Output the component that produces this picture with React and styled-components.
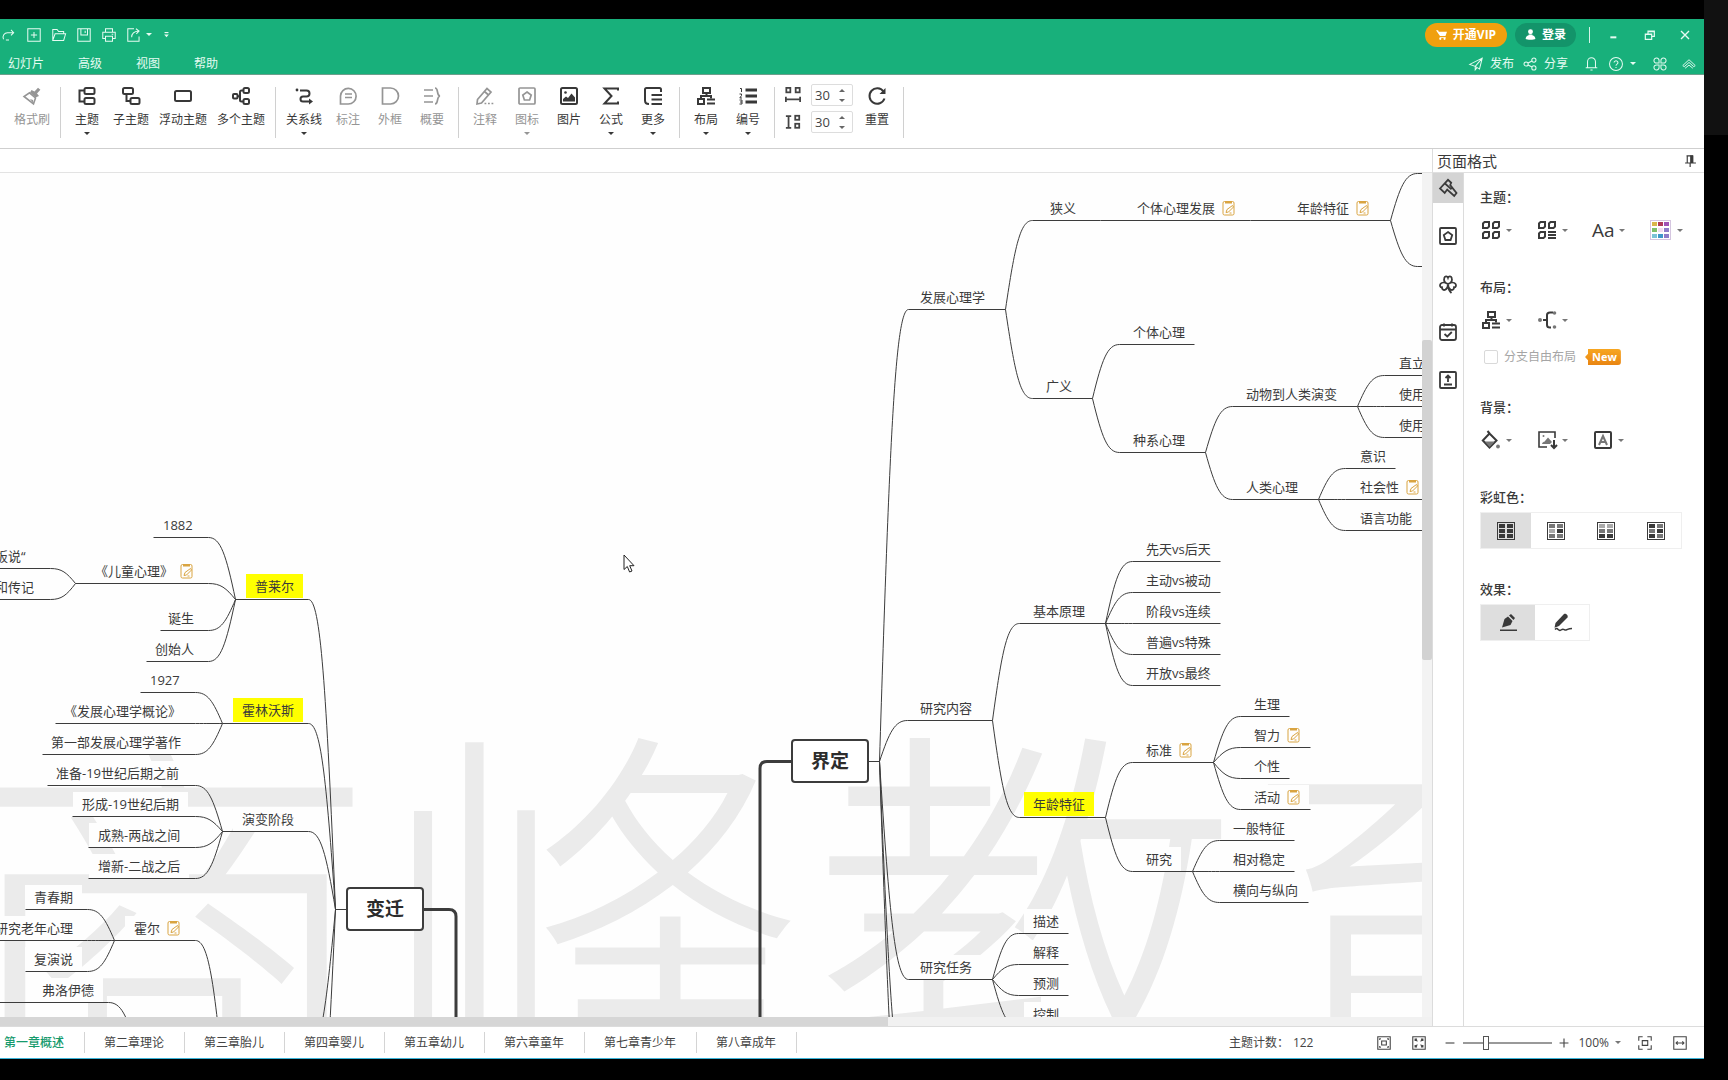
import React, { useState } from 'react'
import styled, { createGlobalStyle } from 'styled-components'

const fonts = '"Open Sans", "Noto Sans", "Noto Sans CJK SC", sans-serif'

/* ---------- icons ---------- */

const glyphs = {
  // quick bar
  redo: <path d="M2 14.5A5.8 5.8 0 0 1 7.5 6H15M11.5 2.5 15 6l-3.500 3.500M5 15.500h4" />,
  add: <path d="M1 1h16v16H1zM9 5v8M5 9h8" />,
  open: <path d="M1 16V2h5.500l2 2.500h6.500v3M1 16l3-8.500h13.500l-2.500 8.500z" />,
  save: <path d="M1 1h16v16H1zM5 1v8h8.500V1M10.500 3.500v3" />,
  print: <path d="M4.500 5.500v-4.500h9v4.500M4.500 13.500H1v-8h16v8h-3.500M4.500 10.500h9V17h-9zM12.500 8h2" />,
  exportIt: <path d="M9 1H1v16h14.500V11M6 12c0-5 3-7.500 9-8M11.500 1l4 3-3.500 3.500" />,
  customize: <><path d="M4 4h10" strokeWidth="3" /><path d="M3 9h12l-6 7z" fill="currentColor" stroke="none" /></>,
  // title bar
  send: <path d="M1 9.500 17 1.500 13.500 15.500 8 12zM17 1.500 8 12v4.500l2.500-3" />,
  share: <><circle cx="4" cy="9" r="2.700" /><circle cx="14" cy="4" r="2.700" /><circle cx="14" cy="14" r="2.700" /><path d="M6.500 7.800 11.500 5.200M6.500 10.200l5 2.600" /></>,
  bell: <path d="M3.500 14.500V6.500a5.500 5.500 0 0 1 11 0V14.500M1 15h16M7.500 18h3" />,
  help: <><circle cx="9" cy="9" r="8.300" /><path d="M6.500 7.200a2.500 2.300 0 1 1 3.800 2C9.300 9.800 9 10 9 11.200M9 12.800v1.400" /></>,
  apps: <><path d="M7.800 7.800V4.800a3.300 3.300 0 1 0-3.300 3zM10.200 7.800V4.800a3.300 3.300 0 1 1 3.300 3zM7.800 10.200v3a3.300 3.300 0 1 1-3.300-3zM10.200 10.200v3a3.300 3.300 0 1 0 3.300-3z" /></>,
  up: <path d="M1 11 9 3.500l8 7.500-1.800 1.500L9 7l-6.200 5.500zM4 14.500 9 10.500l5 4" />,
  cart: <g fill="currentColor" stroke="none"><path d="M0 2h3.500l1 2.500H18l-2.500 7H6.500zM6 13h10v1.500H6z" /><circle cx="7" cy="16" r="1.800" /><circle cx="14" cy="16" r="1.800" /></g>,
  user: <g fill="currentColor" stroke="none"><circle cx="9" cy="4.500" r="4" /><path d="M1 16.500c0-9 16-9 16 0-2 1.500-14 1.500-16 0z" /><path d="M6 9h6v2H6z" /></g>,
  minimize: <path d="M5 12.500h9" strokeWidth="3" />,
  restore: <path d="M2 7.500h9.500v8H2zM6 7V3h9.500v8H12M6 4h9M2 8h9" strokeWidth="1.800" />,
  close: <path d="M3 3l12 12M15 3 3 15" />,
  // ribbon
  brush: <g fill="currentColor" stroke="none"><path d="M11.500 4.500 15 .8l2.400 2L14 6.500l2 2.500-3.500 1.500L7 5.500l1.500-2.500z" /><path d="M6.500 5.800 12.500 11 10.500 17 1 9.500z" fill="none" stroke="currentColor" strokeWidth="1.600" /><path d="m7 12 3 1 .5 3.500z" /></g>,
  topic: <><path d="M6 3.500H1.500v11H7" /><rect x="6.500" y="1" width="10" height="6" rx="1.500" /><rect x="6.500" y="11" width="10" height="6" rx="1.500" /></>,
  subtopic: <><rect x="1" y="1" width="10" height="6" rx="1.500" /><path d="M4.500 7v7H8" /><rect x="8.500" y="11" width="9" height="6" rx="1.500" /></>,
  floating: <rect x="1" y="4" width="16" height="10" rx="1.500" />,
  multi: <><rect x="1" y="7" width="4.500" height="4.500" rx="1" /><rect x="11.500" y="1" width="5.500" height="5" rx="1.500" /><rect x="11.500" y="12" width="5.500" height="5" rx="1.500" /><path d="M5.500 9.200H8M11.500 3.500H9.500Q8 3.500 8 5v8q0 1.500 1.500 1.500h2" /></>,
  relation: <><path d="M5 3.500h6.500a2.800 2.800 0 0 1 0 6H8a2.500 2.500 0 0 0 0 5h6" /><circle cx="2" cy="3" r="1.400" fill="currentColor" stroke="none" /><path d="m14 11.500 4 3-4 3z" fill="currentColor" stroke="none" /></>,
  callout: <path d="M1.500 17V9a7.800 7.800 0 1 1 7.800 8zM6 7h7M6 10.500h7" />,
  boundary: <path d="M1.500 1h8a8 8 0 0 1 0 16h-8z" />,
  summary: <path d="M1 3h9M1 9h9M1 15h9M12 1c4 0 1 7.500 5 8-4 .5-1 8-5 8" />,
  note: <><path d="M1.500 12.500 11 1.500l4 3.500-9.500 11-4.500 1zM8.500 4.500l4 3.500" /><path d="M8.500 16.500h1.800M12 16.500h1.800M15.500 16.500h1.800" /></>,
  mark: <><rect x="1" y="1" width="16" height="16" rx="1" /><path d="m9 5 4.200 3.100-1.600 4.900H6.400L4.800 8.100z" /></>,
  image: <><rect x="1" y="1" width="16" height="16" rx="1.500" /><path d="M3 14.500V12l3-2.500L8 11l3.500-4.500 3.500 4v4z" fill="currentColor" stroke="none" /><circle cx="5.500" cy="5.500" r="1.300" fill="currentColor" stroke="none" /></>,
  formula: <path d="M16 3.500V1.500H2.500l7 7.500-7 7.500H16v-2" />,
  more: <path d="M17 5V2.500Q17 1 15.500 1h-13Q1 1 1 2.500v11Q1 17 5 17M7.500 8H18M7.500 12.500H18M7.500 17H18" />,
  layout: <><rect x="6" y="1" width="7" height="5" /><path d="M9.500 6v2.500M4 12V9h10v2.500" /><rect x="1" y="12" width="6" height="5" /><path d="M10 12.500h8M10 16.500h8" /></>,
  numbering: <><path d="M6.500 3H18M6.500 9H18M6.500 15H18" strokeWidth="3" /><path d="M1 1.500h1.500V5M.5 7h2v1.500L.8 11h2.200M.5 13H3v4H.5M1 15h2" strokeWidth="1" /></>,
  hgap: <><rect x="1.500" y="1" width="4.500" height="5" /><rect x="12" y="1" width="4.500" height="5" /><path d="M1 11v6M17 11v6M1 14h16" /></>,
  vgap: <><path d="M1 2.500h6M4 2.500v13M1 15.500h6" /><rect x="11.500" y="2" width="4.500" height="4.500" /><rect x="11.500" y="11" width="4.500" height="4.500" /></>,
  reset: <><path d="M15.500 4.500A7.700 7.700 0 1 0 16.500 11.500" /><path d="M17.500 1v6h-6z" fill="currentColor" stroke="none" /></>,
  // side rail
  paint: <path d="M1 9.500 9 .8l3.200 3-1 2.200 6.300 8-2.300 3-7-6.500-2.500 3.500zM6 4.500l6.500 5.800" />,
  clover: <path d="M9 9C6 8 4.600 5.500 5.200 3.200 5.700 1 8.200.6 9 2.800 9.800.6 12.300 1 12.800 3.200 13.400 5.500 12 8 9 9zM9 9C6.500 7.500 3 7 1.600 8.800.2 10.600 1.400 12.400 3 12.300 2.700 14.300 4.600 15.600 6.300 14.700 8.300 13.600 9 11.500 9 9zM9 9c2.500-1.500 6-2 7.400-.2 1.400 1.800.2 3.600-1.400 3.500.3 2-1.600 3.300-3.300 2.400C9.700 13.600 9 11.500 9 9zM9 9c0 4 1 7 3.500 9" />,
  task: <><rect x="1" y="2" width="16" height="15" rx="2" /><path d="M1 6.500h16M5 .5v3M13 .5v3M5.500 11l2.800 2.500 4.500-4.500" /></>,
  upload: <><rect x="1" y="1" width="16" height="16" rx="1" /><path d="M9 11V5M6.500 7 9 4.500 11.500 7M5 13.500h8" /></>,
  pin: <><path d="M3.500 2.500h9M4.500 3V12M1.500 12.500h15M8.500 12.500V18" /><path d="M8.500 2h4.500v10.500H8.500z" fill="currentColor" stroke="none" /></>,
  // page format panel
  themeGrid: <path d="M2.500 1H7v4.500L5.500 7H1V2.500zM12.500 1H17v4.500L15.500 7H11V2.500zM2.500 11H7v4.500L5.500 17H1v-4.500zM12.500 11H17v4.500L15.500 17H11v-4.500z" />,
  themeList: <path d="M2.500 1H7v4.500L5.500 7H1V2.500zM12.500 1H17v4.500L15.500 7H11V2.500zM2.500 11H7v4.500L5.500 17H1v-4.500zM10 11h8M10 14h8M10 17h8" />,
  branch: <><path d="M5 9h4M15 1.500h-3Q9 1.500 9 4v10q0 2.500 3 2.500h1" /><g fill="#777" stroke="none"><circle cx="2" cy="9" r="2" /><circle cx="16.500" cy="2" r="1.800" /><circle cx="16.500" cy="16" r="1.800" /></g></>,
  fill: <><path d="M5.500 0 8 3M7.500 2.500l7 7L7.500 16.500.8 9.500z" /><path d="M2.800 10.500h10l-5.200 5.500z" fill="#777" stroke="none" /><circle cx="16" cy="15.500" r="1.900" fill="#777" stroke="none" /></>,
  picture: <><path d="M17 7V1H1v15h8" strokeWidth="1.600" /><path d="M4 13c1-3 2-1.500 3-3l3-3.500 4 4.500-2 2z" fill="#777" stroke="none" /><circle cx="5.500" cy="5" r="1" fill="#777" stroke="none" /><path d="M16 9v8M13 14l3 3 3-3" /></>,
  letter: <><rect x="1" y="1" width="16" height="16" rx="1" /><path d="M5 14 9 5l4 9M6.500 11h5" stroke="#777" /></>,
  pen: <g fill="currentColor" stroke="none"><path d="M10 1.500 12 0l4 4-1.500 2zM9 2.500l4.500 4.500-2 4-8.500 2.500L5.500 5z" /><path d="M1 15.500h17V17H1z" /></g>,
  scribble: <><path d="M11 0c2-.8 4.500 1.500 3.500 3.500L6 12l-4.500 1.800L2.500 9z" fill="currentColor" stroke="none" /><path d="M2 15.500c3-3 3 2.500 6 .5s3 .5 5 0 2-1.500 6-1.500" strokeWidth="1.500" /></>,
  // status bar
  fitPage: <path d="M1 1h16v16H1zM6 6.500h6v5H6zM3.500 5V3.500H5M13 3.500h1.500V5M3.500 13v1.500H5M13 14.500h1.500V13" />,
  expand: <path d="M1 1h16v16H1zM4 6.500V4h2.500M4 4l3 3M14 6.500V4h-2.500M14 4l-3 3M4 11.500V14h2.500M4 14l3-3M14 11.500V14h-2.500M14 14l-3-3" />,
  focus: <path d="M1 6V1h5M12 1h5v5M1 12v5h5M12 17h5v-5M5.500 6h7v6h-7z" />,
  fitWidth: <path d="M1 1h16v16H1zM4 9h10M6 7 4 9l2 2M12 7l2 2-2 2" />,
  minus: <path d="M1 9h16" />,
  plus: <path d="M1 9h16M9 1v16" />,
}

const Svg = styled.svg`
  display: block;
  flex: none;
  width: ${p => p.$size}px;
  height: ${p => p.$size}px;
  fill: none;
  stroke: currentColor;
  overflow: visible;
`

const Icon = ({ name, size = 18, weight = 2 }) => (
  <Svg $size={size} viewBox="0 0 18 18" strokeWidth={weight} aria-hidden="true">{glyphs[name]}</Svg>
)

const Caret = styled.i`
  flex: none;
  width: 0;
  height: 0;
  border: 3px solid transparent;
  border-top-color: ${p => p.$color || 'currentColor'};
  border-bottom: 0;
`

/* ---------- mind map data ---------- */

// x: text left, y: underline, start: where the branch lands, end: where its children leave
const definition = {
  end: 879, y: 588,
  children: [
    { text: '发展心理学', x: 920, y: 136, start: 908, end: 1005, children: [
      { text: '狭义', x: 1050, y: 47, start: 1032, end: 1100, children: [
        { text: '个体心理发展', x: 1137, y: 47, start: 1100, end: 1250, note: true, children: [
          { text: '年龄特征', x: 1297, y: 47, start: 1250, end: 1390, note: true, children: [
            { y: 0, start: 1417, end: 1440 },
            { y: 93, start: 1417, end: 1440 },
          ] },
        ] },
      ] },
      { text: '广义', x: 1046, y: 225, start: 1032, end: 1092, children: [
        { text: '个体心理', x: 1133, y: 171, start: 1119, end: 1194 },
        { text: '种系心理', x: 1133, y: 279, start: 1119, end: 1205, children: [
          { text: '动物到人类演变', x: 1246, y: 233, start: 1232, end: 1357, children: [
            { text: '直立', x: 1399, y: 202, start: 1384, end: 1440 },
            { text: '使用', x: 1399, y: 233, start: 1384, end: 1440 },
            { text: '使用', x: 1399, y: 264, start: 1384, end: 1440 },
          ] },
          { text: '人类心理', x: 1246, y: 326, start: 1232, end: 1318, children: [
            { text: '意识', x: 1360, y: 295, start: 1345, end: 1395 },
            { text: '社会性', x: 1360, y: 326, start: 1345, end: 1440, note: true },
            { text: '语言功能', x: 1360, y: 357, start: 1345, end: 1440 },
          ] },
        ] },
      ] },
    ] },
    { text: '研究内容', x: 920, y: 547, start: 907, end: 992, children: [
      { text: '基本原理', x: 1033, y: 450, start: 1019, end: 1105, children: [
        { text: '先天vs后天', x: 1146, y: 388, start: 1132, end: 1220 },
        { text: '主动vs被动', x: 1146, y: 419, start: 1132, end: 1220 },
        { text: '阶段vs连续', x: 1146, y: 450, start: 1132, end: 1220 },
        { text: '普遍vs特殊', x: 1146, y: 481, start: 1132, end: 1220 },
        { text: '开放vs最终', x: 1146, y: 512, start: 1132, end: 1220 },
      ] },
      { text: '年龄特征', x: 1033, y: 644, start: 1019, end: 1105, marked: true, children: [
        { text: '标准', x: 1146, y: 589, start: 1132, end: 1213, note: true, children: [
          { text: '生理', x: 1254, y: 543, start: 1240, end: 1289 },
          { text: '智力', x: 1254, y: 574, start: 1240, end: 1310, note: true },
          { text: '个性', x: 1254, y: 605, start: 1240, end: 1289 },
          { text: '活动', x: 1254, y: 636, start: 1240, end: 1310, note: true },
        ] },
        { text: '研究', x: 1146, y: 698, start: 1132, end: 1192, children: [
          { text: '一般特征', x: 1233, y: 667, start: 1219, end: 1294 },
          { text: '相对稳定', x: 1233, y: 698, start: 1219, end: 1294 },
          { text: '横向与纵向', x: 1233, y: 729, start: 1219, end: 1308 },
        ] },
      ] },
    ] },
    { text: '研究任务', x: 920, y: 806, start: 908, end: 992, children: [
      { text: '描述', x: 1033, y: 760, start: 1018, end: 1068 },
      { text: '解释', x: 1033, y: 791, start: 1018, end: 1068 },
      { text: '预测', x: 1033, y: 822, start: 1018, end: 1068 },
      { text: '控制', x: 1033, y: 853, start: 1018, end: 1068 },
    ] },
    { y: 920, start: 907, end: 930 },
    { y: 1000, start: 907, end: 930 },
  ],
}

const history = {
  end: 335, y: 736,
  children: [
    { text: '普莱尔', x: 255, y: 426, start: 308, end: 235, marked: true, children: [
      { text: '1882', x: 163, y: 364, start: 208, end: 153 },
      { text: '《儿童心理》', x: 95, y: 410, start: 208, end: 75, note: true, children: [
        { text: '板说“', x: -5, y: 395, start: 50, end: -10 },
        { text: '和传记', x: -5, y: 426, start: 50, end: -10 },
      ] },
      { text: '诞生', x: 168, y: 457, start: 208, end: 160 },
      { text: '创始人', x: 155, y: 488, start: 208, end: 146 },
    ] },
    { text: '霍林沃斯', x: 242, y: 550, start: 308, end: 222, marked: true, children: [
      { text: '1927', x: 150, y: 519, start: 195, end: 140 },
      { text: '《发展心理学概论》', x: 64, y: 550, start: 195, end: 55 },
      { text: '第一部发展心理学著作', x: 51, y: 581, start: 195, end: 42 },
    ] },
    { text: '演变阶段', x: 242, y: 658, start: 308, end: 222, children: [
      { text: '准备-19世纪后期之前', x: 56, y: 612, start: 195, end: 47 },
      { text: '形成-19世纪后期', x: 82, y: 643, start: 195, end: 72 },
      { text: '成熟-两战之间', x: 98, y: 674, start: 195, end: 88 },
      { text: '增新-二战之后', x: 98, y: 705, start: 195, end: 88 },
    ] },
    { y: 880, start: 307, end: 280 },
    { y: 1030, start: 307, end: 280 },
  ],
}

const schools = {
  end: 224, y: 917,
  children: [
    { text: '霍尔', x: 134, y: 767, start: 195, end: 114, note: true, children: [
      { text: '青春期', x: 34, y: 736, start: 87, end: 25 },
      { text: '研究老年心理', x: -5, y: 767, start: 87, end: -10 },
      { text: '复演说', x: 34, y: 798, start: 87, end: 25 },
    ] },
  ],
}

const freud = {
  end: 136, y: 875,
  children: [{ text: '弗洛伊德', x: 42, y: 829, start: 108, end: -10 }],
}

const flatten = node =>
  (node.children || []).flatMap(child => [{ ...child, parent: node }, ...flatten(child)])

const topics = [definition, history, schools, freud].flatMap(flatten)

const branchPath = ({ parent, start, end, y }) => {
  const dx = start - parent.end
  const dy = y - parent.y
  return `M${parent.end} ${parent.y}C${parent.end + dx * 0.35} ${parent.y + dy * 0.72} ${parent.end + dx * 0.55} ${y} ${start} ${y}H${end}`
}

/* ---------- layout ---------- */

const GlobalStyle = createGlobalStyle`
  * { box-sizing: border-box; }
  body {
    margin: 0;
    background: #000;
    font-family: ${fonts};
    font-size: 12px;
    line-height: 16px;
    color: #3a3a3a;
  }
  button, input { font: inherit; color: inherit; margin: 0; }
  button {
    padding: 0;
    border: 0;
    background: none;
    white-space: nowrap;
    cursor: pointer;
  }
`

const Screen = styled.div`
  display: flex;
  min-height: 100vh;
`

const Window = styled.div`
  display: flex;
  flex-direction: column;
  flex: 1;
  min-width: 0;
  margin: 19px 0 21px;
  background: #fff;
`

const Desktop = styled.div`
  width: 24px;
  height: 135px;
  background: #111;
`

const Header = styled.header`
  background: #18b07b;
  border-bottom: 1px solid #6c9f8c;
  color: #e6fbf2;
`

const TitleRow = styled.div`
  display: flex;
  align-items: center;
  justify-content: space-between;
  height: 31px;
`

const MenuRow = styled(TitleRow)`
  height: 24px;
  padding-top: 3px;
`

const QuickBar = styled.div`
  display: flex;
  align-items: center;
  gap: 11px;
  padding-left: 2px;
`

const QuickButton = styled.button`
  display: flex;
  align-items: center;
  gap: 5px;
`

const Menu = styled.nav`
  display: flex;
  gap: 34px;
  padding-left: 8px;
`

const HeaderTools = styled.div`
  display: flex;
  align-items: center;
  padding-right: ${p => p.$end}px;
`

const Pill = styled.button`
  display: flex;
  align-items: center;
  justify-content: center;
  gap: 6px;
  width: ${p => p.$width}px;
  height: 24px;
  margin-right: ${p => p.$after}px;
  border-radius: 12px;
  background: ${p => p.$color};
  color: #fff;
  font-weight: 700;
`

const HeaderRule = styled.span`
  width: 1px;
  height: 16px;
  background: #d5f3e8;
  margin-right: 17px;
`

const HeaderButton = styled.button`
  display: flex;
  align-items: center;
  gap: 7px;
  margin-left: ${p => p.$before}px;
`

const Ribbon = styled.div`
  display: flex;
  height: 74px;
  padding: 12px 0 0 9px;
  border-bottom: 1px solid #cfcfcf;
`

const RibbonGroup = styled.div`
  display: flex;
  align-items: flex-start;
  height: 51px;
  padding-right: 5px;
  margin-right: 5px;
  border-right: 1px solid #d0d0d0;
`

const Tool = styled.button`
  display: flex;
  flex-direction: column;
  align-items: center;
  min-width: 42px;
  padding: 0 5px;
  color: ${p => (p.$muted ? '#959595' : '#383838')};

  span { margin: 7px 0 4px; }
`

const Spacing = styled.div`
  display: flex;
  flex-direction: column;
  gap: 5px;
  padding: 0 3px 0 5px;
  margin-top: -3px;
`

const SpacingRow = styled.label`
  display: flex;
  align-items: center;
  gap: 10px;
  color: #444;
`

const SpinBox = styled.span`
  display: flex;
  align-items: center;
  width: 42px;
  height: 22px;
  padding: 0 6px 0 3px;
  border: 1px solid #ddd;
  border-radius: 2px;

  input {
    width: 24px;
    padding: 0;
    border: 0;
    outline: 0;
    background: none;
    font-size: 13px;
  }
`

const SpinArrows = styled.span`
  display: flex;
  flex-direction: column;
  gap: 7px;
  color: #666;

  i:first-child { transform: rotate(180deg); }
`

const Body = styled.div`
  display: flex;
  flex: 1;
`

const Workspace = styled.main`
  display: flex;
  flex-direction: column;
  flex: 1;
  min-width: 0;
`

const DocumentStrip = styled.div`
  height: 24px;
  border-bottom: 1px solid #e3e3e3;
`

const CanvasRow = styled.div`
  display: flex;
  flex: 1;
`

const Canvas = styled.div`
  position: relative;
  flex: 1;
  overflow: hidden;
  background: #fefefe;
`

const Watermark = styled.div`
  position: absolute;
  left: -50px;
  top: 522px;
  font-family: "Noto Sans CJK SC", sans-serif;
  font-size: 430px;
  font-weight: 300;
  line-height: 430px;
  white-space: nowrap;
  color: #ebebeb;
`

const Branches = styled.svg`
  position: absolute;
  inset: 0;
  width: 100%;
  height: 100%;
  fill: none;
  stroke: #3c3c3c;
  pointer-events: none;
`

const Topic = styled.div`
  position: absolute;
  display: flex;
  align-items: center;
  gap: 7px;
  height: 24px;
  padding: 0 9px;
  background: ${p => (p.$marked ? '#ff0' : '#fefefe')};
  font-size: 13px;
  line-height: 20px;
  white-space: nowrap;
`

const MainTopic = styled.div`
  position: absolute;
  display: flex;
  align-items: center;
  justify-content: center;
  width: 78px;
  height: 44px;
  border: 2px solid #3c3c3c;
  border-radius: 4px;
  background: #fff;
  font-size: 19px;
  font-weight: 700;
  line-height: 24px;
  color: #2c2c2c;
`

const NoteSvg = styled.svg`
  width: 13px;
  height: 16px;
  fill: none;
  stroke: #d9a441;
`

const Pointer = styled.svg`
  position: absolute;
  left: 623px;
  top: 381px;
  width: 12px;
  height: 20px;
`

const VerticalScroll = styled.div`
  width: 10px;
  padding-top: 167px;
  background: #f3f3f3;

  &::before {
    content: '';
    display: block;
    height: 320px;
    border-radius: 2px;
    background: #d2d2d2;
  }
`

const HorizontalScroll = styled.div`
  height: 9px;
  background: #f1f1f1;

  &::before {
    content: '';
    display: block;
    width: 62%;
    height: 9px;
    background: #d6d6d6;
  }
`

const SidePanel = styled.aside`
  display: flex;
  flex-direction: column;
  width: 272px;
  border-left: 1px solid #dcdcdc;
`

const PanelTitle = styled.div`
  display: flex;
  align-items: center;
  justify-content: space-between;
  height: 24px;
  padding: 0 7px 0 4px;
  border-bottom: 1px solid #e0e0e0;
  font-size: 15px;
`

const PanelBody = styled.div`
  display: flex;
  flex: 1;
`

const Rail = styled.div`
  display: flex;
  flex-direction: column;
  gap: 18px;
  width: 31px;
  border-right: 1px solid #dcdcdc;
`

const RailButton = styled.button`
  display: flex;
  align-items: center;
  justify-content: center;
  width: 30px;
  height: 30px;
  background: ${p => (p.$active ? '#d4d4d4' : 'none')};
`

const Format = styled.div`
  flex: 1;
  padding: 14px 16px;
`

const Section = styled.section`
  min-height: ${p => p.$height}px;
`

const SectionTitle = styled.h2`
  margin: 0;
  font-size: 13px;
  font-weight: 500;
  line-height: 20px;
`

const PickerRow = styled.div`
  display: grid;
  grid-template-columns: repeat(4, 56px);
  align-items: center;
  height: 22px;
  margin-top: 12px;
  padding-left: 2px;
`

const Picker = styled.button`
  display: flex;
  align-items: center;
  justify-content: flex-start;
  gap: 6px;
`

const FontSample = styled.span`
  font-size: 19px;
  line-height: 22px;
  margin: 0 -2px;
`

const Swatches = styled.span`
  display: grid;
  grid-template-columns: repeat(3, 5px);
  grid-auto-rows: 4px;
  gap: 2px 1px;
  padding: 1px;
  border: 1px solid #d5c6e0;
`

const Swatch = styled.i`
  background: ${p => p.$color};
`

const FreeLayout = styled.div`
  display: flex;
  align-items: center;
  height: 16px;
  margin-top: 18px;
  padding-left: 4px;
  color: #a5a5a5;

  input {
    appearance: none;
    width: 14px;
    height: 14px;
    border: 1px solid #d9d9d9;
    border-radius: 2px;
    margin-right: 6px;
  }
`

const NewBadge = styled.span`
  margin-left: 9px;
  padding: 0 4px 0 7px;
  border-radius: 3px;
  background: linear-gradient(#f7a621, #e98512);
  clip-path: polygon(0 50%, 3px 30%, 3px 0, 100% 0, 100% 100%, 3px 100%, 3px 70%);
  color: #fff;
  font-size: 11px;
  font-weight: 700;
  line-height: 16px;
`

const Segments = styled.div`
  display: inline-flex;
  margin-top: 5px;
  border: 1px solid #efefef;
`

const Segment = styled.button`
  display: flex;
  align-items: center;
  justify-content: center;
  width: ${p => p.$width}px;
  height: 35px;
  background: ${p => (p.$active ? '#dedede' : 'none')};
`

const StatusBar = styled.footer`
  display: flex;
  align-items: center;
  justify-content: space-between;
  height: 33px;
  border-top: 1px solid #dcdcdc;
  border-bottom: 1px solid #3bb4d8;
  color: #444;
`

const Sheets = styled.div`
  display: flex;
  margin-left: -15px;
`

const Sheet = styled.button`
  height: 21px;
  padding: 0 20px 0 19px;
  border-right: 1px solid #d4d4d4;
  color: ${p => (p.$active ? '#169a6c' : 'inherit')};
  font-weight: ${p => (p.$active ? 500 : 400)};
`

const ZoomTools = styled.div`
  display: flex;
  align-items: center;
  padding-right: 17px;
`

const TopicCount = styled.span`
  margin-right: 64px;

  b { font-weight: 400; margin-left: 4px; }
`

const StatusButton = styled.button`
  display: flex;
  align-items: center;
  gap: 6px;
  margin-left: ${p => p.$before || 0}px;
`

const ZoomRange = styled.input`
  appearance: none;
  width: 89px;
  height: 16px;
  margin: 0 7px 0 8px;
  background: linear-gradient(#999, #999) center / 100% 2px no-repeat;

  &::-webkit-slider-thumb {
    appearance: none;
    width: 6px;
    height: 14px;
    border: 1px solid #555;
    background: #fff;
  }
`

/* ---------- parts ---------- */

const NoteIcon = () => (
  <NoteSvg viewBox="0 0 13 16" aria-hidden="true">
    <rect x="1" y="1.500" width="11" height="13.500" rx="1.500" />
    <path d="M3 1h7v2.500H3z" fill="#d9a441" stroke="none" />
    <path d="M4 12.500 5 9.500l5.500-4 1 1.500-5 5zM7.500 13h2" />
  </NoteSvg>
)

const TableIcon = ({ cells }) => (
  <Svg $size={18} viewBox="0 0 18 18" aria-hidden="true">
    <rect x=".5" y=".5" width="17" height="17" />
    {cells.map((color, i) => (
      <rect key={i} x={2 + (i % 2) * 8} y={2 + Math.floor(i / 2) * 5} width="6" height="4" fill={color} stroke="none" />
    ))}
  </Svg>
)

const ToolButton = ({ icon, label, muted, menu }) => (
  <Tool $muted={muted}>
    <Icon name={icon} weight={muted ? 1.7 : 2} />
    <span>{label}</span>
    {menu && <Caret />}
  </Tool>
)

const SpacingField = ({ icon, label }) => {
  const [value, setValue] = useState('30')
  return (
    <SpacingRow>
      <Icon name={icon} size={16} />
      <SpinBox>
        <input aria-label={label} value={value} onChange={e => setValue(e.target.value)} />
        <SpinArrows><Caret /><Caret /></SpinArrows>
      </SpinBox>
    </SpacingRow>
  )
}

const PickerButton = ({ label, children }) => (
  <Picker aria-label={label}>{children}<Caret $color="#777" /></Picker>
)

const dark = '#3a3a3a'
const mid = '#777'
const light = '#aaa'
const rainbow = [
  [dark, dark, dark, dark, dark, dark],
  [mid, mid, light, dark, mid, mid],
  [light, light, mid, mid, dark, dark],
  [dark, mid, mid, dark, dark, mid],
]
const palette = ['#d9b64a', '#b03a5b', '#a052b5', '#7fbf6a', '#f3dcf0', '#8f7cc9', '#7cc3d6', '#3f97c9', '#8f7cc9']
const sheets = ['第一章概述', '第二章理论', '第三章胎儿', '第四章婴儿', '第五章幼儿', '第六章童年', '第七章青少年', '第八章成年']

const MindMap = () => (
  <Canvas>
    <Watermark aria-hidden="true">商峰教育</Watermark>
    {topics.filter(t => t.text).map((t, i) => (
      <Topic key={i} $marked={t.marked} style={{ left: t.x - 9, top: t.y - (t.marked ? 25 : 24) }}>
        {t.text}
        {t.note && <NoteIcon />}
      </Topic>
    ))}
    <Branches>
      <g transform="translate(.5 .5)">
        {topics.map((t, i) => <path key={i} d={branchPath(t)} />)}
        <path d="M335 736h12M868 588h11" />
      </g>
      <path d="M423 736.500h26q7 0 7 7V900M792 588.500h-25q-7 0-7 7V900" strokeWidth="3" />
    </Branches>
    <MainTopic style={{ left: 346, top: 714 }}>变迁</MainTopic>
    <MainTopic style={{ left: 791, top: 566 }}>界定</MainTopic>
    <Pointer viewBox="0 0 12 20" aria-hidden="true">
      <path d="M1 1v14.500l3.300-3L6.600 18l2.400-1-2.300-5.300H11z" fill="#fff" stroke="#222" />
    </Pointer>
  </Canvas>
)

const FormatPanel = () => (
  <Format>
    <Section $height={90}>
      <SectionTitle>主题：</SectionTitle>
      <PickerRow>
        <PickerButton label="主题样式"><Icon name="themeGrid" /></PickerButton>
        <PickerButton label="主题列表"><Icon name="themeList" /></PickerButton>
        <PickerButton label="字体"><FontSample>Aa</FontSample></PickerButton>
        <PickerButton label="配色">
          <Swatches>{palette.map((c, i) => <Swatch key={i} $color={c} />)}</Swatches>
        </PickerButton>
      </PickerRow>
    </Section>
    <Section $height={120}>
      <SectionTitle>布局：</SectionTitle>
      <PickerRow>
        <PickerButton label="布局方式"><Icon name="layout" /></PickerButton>
        <PickerButton label="连接线"><Icon name="branch" /></PickerButton>
      </PickerRow>
      <FreeLayout>
        <input type="checkbox" id="free-layout" />
        <label htmlFor="free-layout">分支自由布局</label>
        <NewBadge>New</NewBadge>
      </FreeLayout>
    </Section>
    <Section $height={90}>
      <SectionTitle>背景：</SectionTitle>
      <PickerRow>
        <PickerButton label="背景颜色"><Icon name="fill" /></PickerButton>
        <PickerButton label="背景图片"><Icon name="picture" /></PickerButton>
        <PickerButton label="水印"><Icon name="letter" /></PickerButton>
      </PickerRow>
    </Section>
    <Section $height={92}>
      <SectionTitle>彩虹色：</SectionTitle>
      <Segments>
        {rainbow.map((cells, i) => (
          <Segment key={i} $width={50} $active={i === 0} aria-label={`彩虹色 ${i + 1}`}><TableIcon cells={cells} /></Segment>
        ))}
      </Segments>
    </Section>
    <Section>
      <SectionTitle>效果：</SectionTitle>
      <Segments>
        <Segment $width={54} $active aria-label="标准"><Icon name="pen" /></Segment>
        <Segment $width={54} aria-label="手绘"><Icon name="scribble" /></Segment>
      </Segments>
    </Section>
  </Format>
)

const App = () => {
  const [zoom, setZoom] = useState(23)

  return (
    <Screen>
      <GlobalStyle />
      <Window>
        <Header>
          <TitleRow>
            <QuickBar>
              {['redo', 'add', 'open', 'save', 'print'].map(name => (
                <QuickButton key={name} aria-label={name}><Icon name={name} size={14} weight={1.3} /></QuickButton>
              ))}
              <QuickButton aria-label="export"><Icon name="exportIt" size={14} weight={1.3} /><Caret /></QuickButton>
              <QuickButton aria-label="customize"><Icon name="customize" size={7} /></QuickButton>
            </QuickBar>
            <HeaderTools $end={13}>
              <Pill $width={82} $after={8} $color="#f0a00e"><Icon name="cart" size={11} />开通VIP</Pill>
              <Pill $width={61} $after={13} $color="#13946a"><Icon name="user" size={11} />登录</Pill>
              <HeaderRule />
              <HeaderButton aria-label="最小化"><Icon name="minimize" size={12} /></HeaderButton>
              <HeaderButton $before={25} aria-label="还原"><Icon name="restore" size={12} /></HeaderButton>
              <HeaderButton $before={23} aria-label="关闭"><Icon name="close" size={12} /></HeaderButton>
            </HeaderTools>
          </TitleRow>
          <MenuRow>
            <Menu>
              <button>幻灯片</button>
              <button>高级</button>
              <button>视图</button>
              <button>帮助</button>
            </Menu>
            <HeaderTools $end={8}>
              <HeaderButton><Icon name="send" size={14} weight={1.3} />发布</HeaderButton>
              <HeaderButton $before={9}><Icon name="share" size={14} weight={1.3} />分享</HeaderButton>
              <HeaderButton $before={17} aria-label="通知"><Icon name="bell" size={13} weight={1.4} /></HeaderButton>
              <HeaderButton $before={11} aria-label="帮助中心"><Icon name="help" size={14} weight={1.3} /><Caret /></HeaderButton>
              <HeaderButton $before={17} aria-label="应用"><Icon name="apps" size={14} weight={1.3} /></HeaderButton>
              <HeaderButton $before={15} aria-label="收起"><Icon name="up" size={14} weight={1.2} /></HeaderButton>
            </HeaderTools>
          </MenuRow>
        </Header>

        <Ribbon>
          <RibbonGroup>
            <ToolButton icon="brush" label="格式刷" muted />
          </RibbonGroup>
          <RibbonGroup>
            <ToolButton icon="topic" label="主题" menu />
            <ToolButton icon="subtopic" label="子主题" />
            <ToolButton icon="floating" label="浮动主题" />
            <ToolButton icon="multi" label="多个主题" />
          </RibbonGroup>
          <RibbonGroup>
            <ToolButton icon="relation" label="关系线" menu />
            <ToolButton icon="callout" label="标注" muted />
            <ToolButton icon="boundary" label="外框" muted />
            <ToolButton icon="summary" label="概要" muted />
          </RibbonGroup>
          <RibbonGroup>
            <ToolButton icon="note" label="注释" muted />
            <ToolButton icon="mark" label="图标" muted menu />
            <ToolButton icon="image" label="图片" />
            <ToolButton icon="formula" label="公式" menu />
            <ToolButton icon="more" label="更多" menu />
          </RibbonGroup>
          <RibbonGroup>
            <ToolButton icon="layout" label="布局" menu />
            <ToolButton icon="numbering" label="编号" menu />
          </RibbonGroup>
          <RibbonGroup>
            <Spacing>
              <SpacingField icon="hgap" label="水平间距" />
              <SpacingField icon="vgap" label="垂直间距" />
            </Spacing>
            <ToolButton icon="reset" label="重置" />
          </RibbonGroup>
        </Ribbon>

        <Body>
          <Workspace>
            <DocumentStrip />
            <CanvasRow>
              <MindMap />
              <VerticalScroll />
            </CanvasRow>
            <HorizontalScroll />
          </Workspace>
          <SidePanel>
            <PanelTitle>页面格式<Icon name="pin" size={13} weight={1.6} /></PanelTitle>
            <PanelBody>
              <Rail>
                {['paint', 'mark', 'clover', 'task', 'upload'].map((name, i) => (
                  <RailButton key={name} $active={i === 0} aria-label={name}><Icon name={name} weight={1.8} /></RailButton>
                ))}
              </Rail>
              <FormatPanel />
            </PanelBody>
          </SidePanel>
        </Body>

        <StatusBar>
          <Sheets>
            {sheets.map((name, i) => <Sheet key={name} $active={i === 0}>{name}</Sheet>)}
          </Sheets>
          <ZoomTools>
            <TopicCount>主题计数：<b>122</b></TopicCount>
            <StatusButton aria-label="整页"><Icon name="fitPage" size={14} weight={1.4} /></StatusButton>
            <StatusButton $before={21} aria-label="全屏"><Icon name="expand" size={14} weight={1.4} /></StatusButton>
            <StatusButton $before={19} aria-label="缩小"><Icon name="minus" size={10} /></StatusButton>
            <ZoomRange type="range" aria-label="缩放" value={zoom} onChange={e => setZoom(Number(e.target.value))} />
            <StatusButton aria-label="放大"><Icon name="plus" size={10} /></StatusButton>
            <StatusButton $before={9}>100%<Caret $color="#777" /></StatusButton>
            <StatusButton $before={17} aria-label="聚焦"><Icon name="focus" size={14} weight={1.4} /></StatusButton>
            <StatusButton $before={21} aria-label="适合宽度"><Icon name="fitWidth" size={14} weight={1.4} /></StatusButton>
          </ZoomTools>
        </StatusBar>
      </Window>
      <Desktop />
    </Screen>
  )
}

export default App
